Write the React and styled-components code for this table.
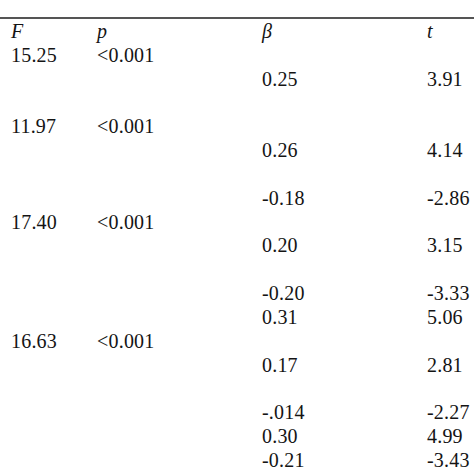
import React from "react";
import styled, { createGlobalStyle } from "styled-components";

const Global = createGlobalStyle`
  html, body { margin: 0; padding: 0; background: #fff; }
  body { width: 474px; height: 474px; overflow: hidden; }
`;

const Page = styled.div`
  padding-top: 17px;
  font-family: "Liberation Serif", "Times New Roman", serif;
  color: #141414;
`;

const Table = styled.div`
  border-top: 2px solid #555;
  padding-top: 1px;
  padding-left: 11px;
  display: grid;
  grid-template-columns: 86px 165px 165px 1fr;
  grid-auto-rows: 23.83px;
  font-size: 20px;
  line-height: 23.83px;
  letter-spacing: 0.2px;
`;

const Cell = styled.div`
  white-space: nowrap;
  font-style: ${(p) => (p.$head ? "italic" : "normal")};
`;

const rows = [
  ["F", "p", "β", "t"],
  ["15.25", "<0.001", "", ""],
  ["", "", "0.25", "3.91"],
  ["", "", "", ""],
  ["11.97", "<0.001", "", ""],
  ["", "", "0.26", "4.14"],
  ["", "", "", ""],
  ["", "", "-0.18", "-2.86"],
  ["17.40", "<0.001", "", ""],
  ["", "", "0.20", "3.15"],
  ["", "", "", ""],
  ["", "", "-0.20", "-3.33"],
  ["", "", "0.31", "5.06"],
  ["16.63", "<0.001", "", ""],
  ["", "", "0.17", "2.81"],
  ["", "", "", ""],
  ["", "", "-.014", "-2.27"],
  ["", "", "0.30", "4.99"],
  ["", "", "-0.21", "-3.43"],
];

export default function App() {
  return (
    <>
      <Global />
      <Page>
        <Table>
          {rows.map((r, i) =>
            r.map((c, j) => (
              <Cell key={`${i}-${j}`} $head={i === 0}>
                {c}
              </Cell>
            ))
          )}
        </Table>
      </Page>
    </>
  );
}
